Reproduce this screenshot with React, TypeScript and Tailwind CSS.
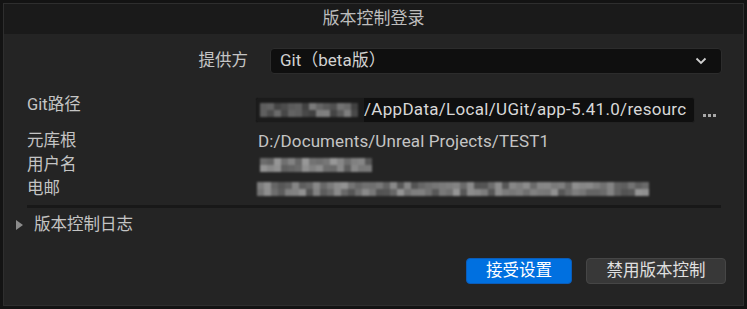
import React from "react";

// pixelated, blurred placeholder for hidden personal data
function Mosaic({ cols, rows, cell, base, seed }: { cols: number; rows: number; cell: number; base: number; seed: number }) {
  let s = seed;
  const rnd = () => {
    s = (s * 9301 + 49297) % 233280;
    return s / 233280;
  };
  const cells: number[] = [];
  for (let i = 0; i < cols * rows; i++) cells.push(base + Math.round(rnd() * 70));

  return (
    <div
      className="grid blur-[1px]"
      style={{ gridTemplateColumns: `repeat(${cols}, ${cell}px)`, gridAutoRows: `${cell}px` }}
    >
      {cells.map((v, i) => (
        <div key={i} style={{ backgroundColor: `rgb(${v},${v},${v})` }} />
      ))}
    </div>
  );
}

export default function App() {
  return (
    <div
      className="w-[747px] h-[309px] bg-[#131313] p-[3px] text-[16.5px] text-[#c4c4c4]"
      style={{ fontFamily: 'Roboto, "Noto Sans CJK SC", sans-serif' }}
    >
      <div className="h-full border border-[#2e2e2e] flex flex-col">
        {/* Title */}
        <div className="h-[30px] bg-[#1a1a1a] flex items-center justify-center text-[17px] text-[#bdbdbd]">
          版本控制登录
        </div>

        <div className="flex-1 bg-[#242424] flex flex-col">
          {/* Provider */}
          <div className="flex items-center mt-[14px]">
            <div className="w-[244px] text-right">提供方</div>
            <div className="ml-[22px] w-[452px] h-[26px] rounded-[4px] bg-[#0f0f0f] border border-[#2c2c2c] flex items-center justify-between pl-[9px] pr-[14px] text-[#d2d2d2] text-[17px]">
              <span>Git（beta版）</span>
              <svg width="12" height="8" viewBox="0 0 12 8" fill="none">
                <path d="M1.5 1.5 L6 6 L10.5 1.5" stroke="#d0d0d0" strokeWidth="1.8" />
              </svg>
            </div>
          </div>

          {/* Git path */}
          <div className="flex items-center mt-[23px] pl-[23px]">
            <div className="w-[228px] -mt-[10px]">Git路径</div>
            <div className="w-[440px] h-[26px] rounded-[3px] bg-[#0f0f0f] border border-[#222] flex items-center pr-[4px] overflow-hidden">
              <div className="h-full w-[108px] bg-[#1b1b1b] flex items-center pl-[4px] shrink-0">
                <Mosaic cols={14} rows={2} cell={7} base={60} seed={7} />
              </div>
              <div className="flex-1 overflow-hidden">
                <span className="whitespace-nowrap text-[#d8d8d8] text-[17px] tracking-[0.3px]">/AppData/Local/UGit/app-5.41.0/resourc</span>
              </div>
            </div>
            <div className="ml-[8px] mt-[10px] flex gap-[2px]">
              <div className="w-[3px] h-[3px] bg-[#a8a8a8]" />
              <div className="w-[3px] h-[3px] bg-[#a8a8a8]" />
              <div className="w-[3px] h-[3px] bg-[#a8a8a8]" />
            </div>
          </div>

          {/* Info rows */}
          <div className="mt-[6px] pl-[23px] leading-[24px]">
            <div className="flex">
              <div className="w-[231px]">元库根</div>
              <div className="text-[17px] tracking-[0.1px]">D:/Documents/Unreal Projects/TEST1</div>
            </div>
            <div className="flex items-center">
              <div className="w-[233px]">用户名</div>
              <Mosaic cols={16} rows={2} cell={7} base={85} seed={3} />
            </div>
            <div className="flex items-center">
              <div className="w-[230px]">电邮</div>
              <Mosaic cols={56} rows={2} cell={7} base={80} seed={11} />
            </div>
          </div>

          <div className="mt-[4px] ml-[23px] w-[694px] h-[3px] bg-[#181818]" />

          {/* Log */}
          <div className="mt-[5px] flex items-center leading-[24px] pl-[12px]">
            <svg width="7" height="10" viewBox="0 0 7 10">
              <path d="M0 0 L7 5 L0 10 Z" fill="#8c8c8c" />
            </svg>
            <span className="ml-[11px]">版本控制日志</span>
          </div>

          {/* Buttons */}
          <div className="mt-[21px] flex justify-end gap-[14px] pr-[17px]">
            <button className="w-[106px] h-[26px] rounded-[4px] bg-[#0070e0] border border-[#0b5cb8] text-white flex items-center justify-center">
              接受设置
            </button>
            <button className="w-[140px] h-[26px] rounded-[4px] bg-[#383838] border border-[#464646] text-[#e0e0e0] flex items-center justify-center">
              禁用版本控制
            </button>
          </div>
        </div>
      </div>
    </div>
  );
}
